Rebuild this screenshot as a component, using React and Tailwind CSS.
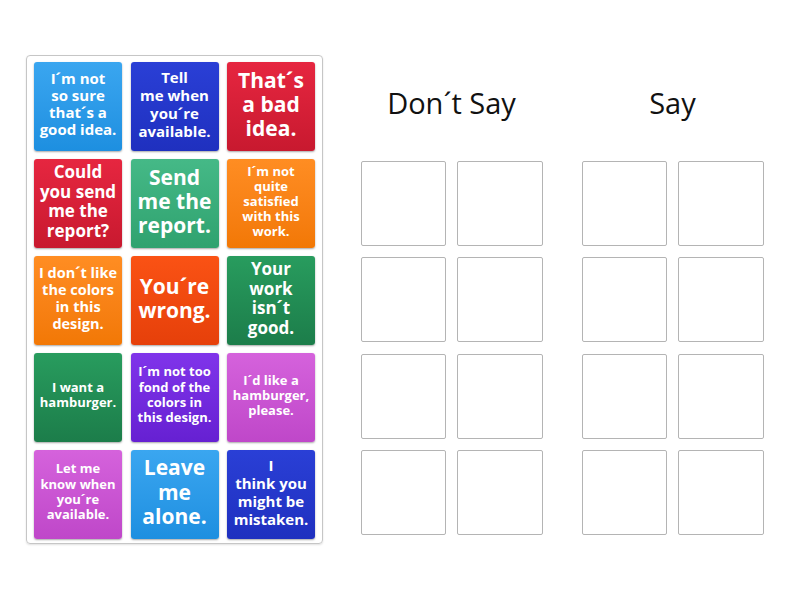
import React from "react";

const tiles = [
  { lines: ["I´m not", "so sure", "that´s a", "good idea."], bg: "bg-linear-to-b from-[#3aa6f0] to-[#1d8fe0]", text: "text-[15px] leading-[17px]" },
  { lines: ["Tell", "me when", "you´re", "available."], bg: "bg-linear-to-b from-[#2a3fd6] to-[#1f30bf]", text: "text-[15px] leading-[18px]" },
  { lines: ["That´s", "a bad", "idea."], bg: "bg-linear-to-b from-[#e62640] to-[#c8192f]", text: "text-[21px] leading-[24px]" },
  { lines: ["Could", "you send", "me the", "report?"], bg: "bg-linear-to-b from-[#e62640] to-[#c8192f]", text: "text-[17px] leading-[19.5px]" },
  { lines: ["Send", "me the", "report."], bg: "bg-linear-to-b from-[#45b987] to-[#2fa26f]", text: "text-[21px] leading-[24px]" },
  { lines: ["I´m not", "quite", "satisfied", "with this", "work."], bg: "bg-linear-to-b from-[#ff8d22] to-[#f27805]", text: "text-[13px] leading-[15px]" },
  { lines: ["I don´t like", "the colors", "in this", "design."], bg: "bg-linear-to-b from-[#ff8d22] to-[#f27805]", text: "text-[14.5px] leading-[17px]" },
  { lines: ["You´re", "wrong."], bg: "bg-linear-to-b from-[#fa5214] to-[#e6400a]", text: "text-[21px] leading-[24px]" },
  { lines: ["Your", "work", "isn´t", "good."], bg: "bg-linear-to-b from-[#289c5e] to-[#1c7d4a]", text: "text-[17px] leading-[19.5px]" },
  { lines: ["I want a", "hamburger."], bg: "bg-linear-to-b from-[#289c5e] to-[#1c7d4a]", text: "text-[13px] leading-[15px]" },
  { lines: ["I´m not too", "fond of the", "colors in", "this design."], bg: "bg-linear-to-b from-[#8034ea] to-[#6620d2]", text: "text-[13px] leading-[15.3px]" },
  { lines: ["I´d like a", "hamburger,", "please."], bg: "bg-linear-to-b from-[#d562dc] to-[#bf47c9]", text: "text-[13px] leading-[15px]" },
  { lines: ["Let me", "know when", "you´re", "available."], bg: "bg-linear-to-b from-[#d562dc] to-[#bf47c9]", text: "text-[13px] leading-[15.3px]" },
  { lines: ["Leave", "me", "alone."], bg: "bg-linear-to-b from-[#3aa6f0] to-[#1d8fe0]", text: "text-[21px] leading-[24.5px]" },
  { lines: ["I", "think you", "might be", "mistaken."], bg: "bg-linear-to-b from-[#2a3fd6] to-[#1f30bf]", text: "text-[15px] leading-[18px]" },
];

function Tile({ tile }) {
  return (
    <div
      className={`w-[88px] h-[89px] pb-[5px] rounded-[3px] flex items-center justify-center text-center text-white font-bold shadow-[0_1px_2px_rgba(0,0,0,0.35)] ${tile.bg}`}
    >
      <div className={tile.text}>
        {tile.lines.map((line, i) => (
          <div key={i} className="whitespace-nowrap">
            {line}
          </div>
        ))}
      </div>
    </div>
  );
}

function DropGroup({ title }) {
  return (
    <div className="w-[183px] flex flex-col items-center">
      <h2 className="text-[29px] leading-[40px] text-[#111] font-normal">{title}</h2>
      <div className="mt-[38px] grid grid-cols-[85px_86px] gap-x-[11px] gap-y-[11.3px]">
        {Array.from({ length: 8 }).map((_, i) => (
          <div
            key={i}
            className="h-[85px] border border-[#b4b4b4] rounded-[2px] bg-white"
          />
        ))}
      </div>
    </div>
  );
}

export default function App() {
  return (
    <div className="w-[800px] h-[600px] bg-white flex items-start font-['Open_Sans',sans-serif]">
      <div className="ml-[26px] mt-[55px] w-[297px] h-[489px] border border-[#c6c6c6] rounded-[4px] shadow-[0_1px_2px_rgba(0,0,0,0.12)] pt-[6px] pl-[7px]">
        <div className="grid grid-cols-[88px_88px_88px] gap-x-[8.5px] gap-y-[8px]">
          {tiles.map((tile, i) => (
            <Tile key={i} tile={tile} />
          ))}
        </div>
      </div>
      <div className="ml-[37px] mt-[83px] flex gap-[38px]">
        <DropGroup title="Don´t Say" />
        <DropGroup title="Say" />
      </div>
    </div>
  );
}
